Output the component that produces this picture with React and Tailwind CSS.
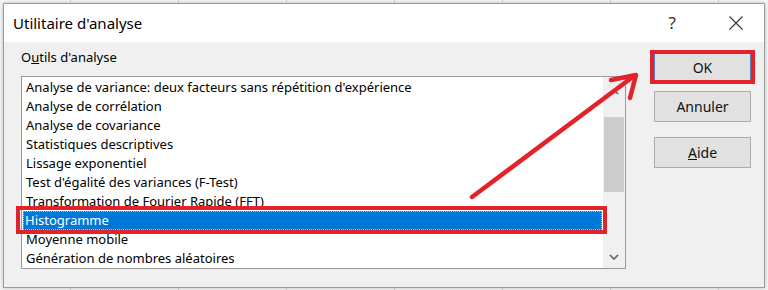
import React from "react";

const items = [
  "Analyse de variance: deux facteurs sans répétition d'expérience",
  "Analyse de corrélation",
  "Analyse de covariance",
  "Statistiques descriptives",
  "Lissage exponentiel",
  "Test d'égalité des variances (F-Test)",
  "Transformation de Fourier Rapide (FFT)",
  "Histogramme",
  "Moyenne mobile",
  "Génération de nombres aléatoires",
];

function Btn({ children, def }) {
  return (
    <div
      className={
        "h-[31px] w-[97px] flex items-center justify-center bg-[#e1e1e1] text-[14px] font-normal text-[#111] border " +
        (def ? "border-[#5a7fc0]" : "border-[#adadad]")
      }
    >
      {children}
    </div>
  );
}

export default function App() {
  return (
    <div
      className="relative w-[768px] h-[290px] overflow-hidden bg-[#f7f7f7] bg-[repeating-linear-gradient(90deg,transparent_0,transparent_70px,#d4d4d4_70px,#d4d4d4_71px,transparent_71px,transparent_108px)] p-[3px] pr-[3px]"
      style={{ fontFamily: '"Noto Sans", "Open Sans", sans-serif' }}
    >
      <div className="w-[762px] h-[285px] border border-[#9c9c9c] flex flex-col shadow-[0_0_4px_rgba(0,0,0,0.25)]">
        {/* Title bar */}
        <div className="h-[38px] bg-white flex items-center pl-[9px] pr-[21px] shrink-0">
          <span className="text-[15px] text-black">Utilitaire d'analyse</span>
          <span className="ml-auto text-[17px] text-[#333] mr-[53px]">?</span>
          <svg width="14" height="14" viewBox="0 0 14 14">
            <path d="M0.5 0.5 L13.5 13.5 M13.5 0.5 L0.5 13.5" stroke="#333" strokeWidth="1.1" fill="none" />
          </svg>
        </div>
        {/* Body */}
        <div className="flex-1 bg-[#f0f0f0] flex pl-[17px] gap-[28px]">
          <div className="w-[605px] flex flex-col pt-[6px]">
            <div className="h-[18px] leading-[18px] text-[13px] text-black">
              O<span className="underline">u</span>tils d'analyse
            </div>
            <div className="mt-[10px] h-[193px] border border-[#9a9a9a] bg-white flex">
              <div className="flex-1 pt-[1px]">
                {items.map((t, i) =>
                  i === 7 ? (
                    <div key={t} className="relative ml-[1px] mr-[1px] h-[19px]">
                      <div className="h-[19px] bg-[#0078d7] text-white text-[13px] leading-[19px] pl-[2px] outline-1 outline-dotted outline-[#9cc4ea] -outline-offset-1 whitespace-nowrap">
                        {t}
                      </div>
                      <div className="absolute left-[-7px] right-[-5px] top-[-5px] bottom-[-4px] border-[4px] border-[#e3232c]" />
                    </div>
                  ) : (
                    <div key={t} className="h-[19px] text-[13px] leading-[19px] pl-[4px] text-black whitespace-nowrap">
                      {t}
                    </div>
                  )
                )}
              </div>
              <div className="w-[22px] bg-[#f0f0f0] flex flex-col items-center">
                <svg width="10" height="6" viewBox="0 0 10 6" className="mt-[12px]">
                  <path d="M1 5 L5 1 L9 5" stroke="#606060" strokeWidth="1.6" fill="none" />
                </svg>
                <div className="mt-[22px] w-[20px] h-[75px] bg-[#cdcdcd]" />
                <div className="flex-1" />
                <svg width="10" height="6" viewBox="0 0 10 6" className="mb-[8px]">
                  <path d="M1 1 L5 5 L9 1" stroke="#606060" strokeWidth="1.6" fill="none" />
                </svg>
              </div>
            </div>
          </div>
          <div className="w-[97px] flex flex-col pt-[10px]">
            <div className="relative">
              <Btn def>OK</Btn>
              <div className="absolute left-[-4px] right-[-4px] top-[-2px] bottom-[-1px] border-[4px] border-[#e3232c]" />
            </div>
            <div className="mt-[8px]">
              <Btn>Annuler</Btn>
            </div>
            <div className="mt-[15px]">
              <Btn>
                <span className="underline">A</span>ide
              </Btn>
            </div>
          </div>
        </div>
      </div>
      <svg className="absolute inset-0 pointer-events-none" width="768" height="290" viewBox="0 0 768 290">
        <path d="M472 197 L634 76" stroke="#e3232c" strokeWidth="4.5" strokeLinecap="round" fill="none" />
        <path d="M611 80 L636 75 L630 98" stroke="#e3232c" strokeWidth="4.5" strokeLinecap="round" strokeLinejoin="round" fill="none" />
      </svg>
    </div>
  );
}
